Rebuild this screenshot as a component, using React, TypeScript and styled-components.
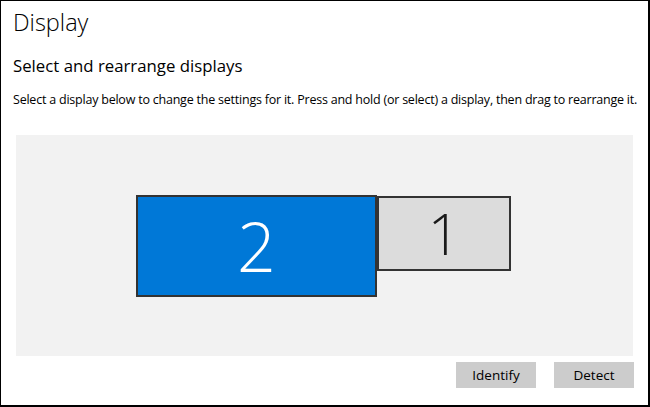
import React from "react";
import styled, { createGlobalStyle } from "styled-components";

const Global = createGlobalStyle`
  html, body { margin: 0; padding: 0; background: #fff; }
  * { box-sizing: border-box; }
`;

const Frame = styled.div`
  width: 650px;
  height: 407px;
  border-style: solid;
  border-color: #000;
  border-width: 1px 2px 2px 1px;
  background: #fff;
  font-family: "Open Sans", "Noto Sans", sans-serif;
  color: #000;
  padding: 0 0 0 12px;
  display: flex;
  flex-direction: column;
`;

const Title = styled.h1`
  margin: 5px 0 0 0;
  font-size: 23.5px;
  font-weight: 300;
  line-height: 32px;
  letter-spacing: 0;
`;

const Subtitle = styled.h2`
  margin: 17px 0 0 0;
  font-size: 16.8px;
  font-weight: 400;
  line-height: 22px;
  letter-spacing: 0;
`;

const Description = styled.p`
  margin: 15px 0 0 0;
  font-size: 12.5px;
  line-height: 16px;
  letter-spacing: -0.22px;
  white-space: nowrap;
`;

const Canvas = styled.div`
  position: relative;
  margin: 27px 0 0 3px;
  width: 617px;
  height: 221px;
  background: #f2f2f2;
`;

const Monitor = styled.div<{ $selected?: boolean }>`
  position: absolute;
  border: 2px solid #333;
  background: ${(p) => (p.$selected ? "#0078d7" : "#dcdcdc")};
  color: ${(p) => (p.$selected ? "#fff" : "#1a1a1a")};
  display: flex;
  align-items: center;
  justify-content: center;
  font-weight: 300;
  line-height: 1;
`;

const ButtonRow = styled.div`
  display: flex;
  justify-content: flex-end;
  gap: 18px;
  margin: 6px 0 0 0;
  padding-right: 14px;
`;

const Button = styled.button`
  width: 80px;
  height: 26px;
  border: none;
  background: #cccccc;
  font-family: "Open Sans", "Noto Sans", sans-serif;
  font-size: 13.5px;
  color: #000;
  padding: 0;
`;

export default function App() {
  return (
    <>
      <Global />
      <Frame>
        <Title>Display</Title>
        <Subtitle>Select and rearrange displays</Subtitle>
        <Description>
          Select a display below to change the settings for it. Press and hold (or select) a display, then drag to rearrange it.
        </Description>
        <Canvas>
          <Monitor $selected style={{ left: 120, top: 60, width: 241, height: 102, fontSize: 68 }}>2</Monitor>
          <Monitor style={{ left: 361, top: 61, width: 134, height: 75, fontSize: 57 }}>1</Monitor>
        </Canvas>
        <ButtonRow>
          <Button>Identify</Button>
          <Button>Detect</Button>
        </ButtonRow>
      </Frame>
    </>
  );
}
